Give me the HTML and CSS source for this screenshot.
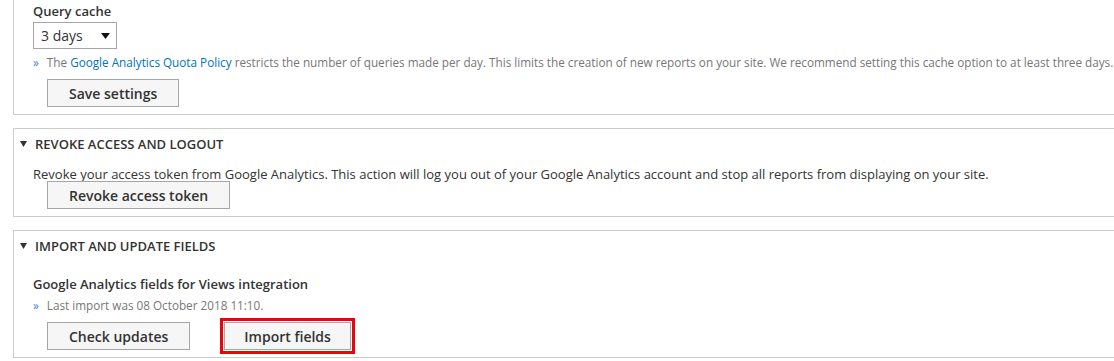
FILE: index.html
```html
<!DOCTYPE html>
<html lang="en">
<head>
    <meta charset="UTF-8">
    <meta name="viewport" content="width=device-width, initial-scale=1.0">
    <title>Google Analytics Reports settings</title>
    <link rel="stylesheet" href="styles.css">
</head>
<body>
    <div class="page">
        <!-- settings (top of the fieldset is scrolled off) -->
        <div class="panel panel-cut">
            <div class="panel-body">
                <div class="field-label">Query cache</div>
                <div class="select-box">
                    <span>3 days</span>
                    <svg class="select-arrow" width="9" height="6" viewBox="0 0 9 6"><path d="M0 0H9L4.5 6Z" fill="#111"/></svg>
                </div>
                <div class="description"><span class="raquo">&raquo;</span> The <a href="#">Google Analytics Quota Policy</a> restricts the number of queries made per day. This limits the creation of new reports on your site. We recommend setting this cache option to at least three days.</div>
                <div class="actions">
                    <button class="btn">Save settings</button>
                </div>
            </div>
        </div>

        <div class="panel">
            <div class="legend">
                <svg class="legend-arrow" width="7" height="6" viewBox="0 0 7 6"><path d="M0 0H7L3.5 6Z" fill="#333"/></svg>
                <span>Revoke access and logout</span>
            </div>
            <div class="panel-body">
                <p class="text">Revoke your access token from Google Analytics. This action will log you out of your Google Analytics account and stop all reports from displaying on your site.</p>
                <div class="actions">
                    <button class="btn">Revoke access token</button>
                </div>
            </div>
        </div>

        <div class="panel">
            <div class="legend">
                <svg class="legend-arrow" width="7" height="6" viewBox="0 0 7 6"><path d="M0 0H7L3.5 6Z" fill="#333"/></svg>
                <span>Import and update fields</span>
            </div>
            <div class="panel-body panel-body-spaced">
                <div class="field-label">Google Analytics fields for Views integration</div>
                <div class="description description-tight"><span class="raquo">&raquo;</span> Last import was 08 October 2018 11:10.</div>
                <div class="actions">
                    <button class="btn">Check updates</button>
                    <button class="btn btn-marked">Import fields</button>
                </div>
            </div>
        </div>
    </div>
</body>
</html>
```

FILE: styles.css
```css
body {
    margin: 0;
    background: #fff;
    color: #333;
    font-family: "Open Sans", "Liberation Sans", sans-serif;
    overflow: hidden;
}

.page {
    padding-left: 13px;
}

.panel {
    border: 1px solid #ccc;
    margin-right: -20px;
    margin-bottom: 13px;
}

.panel-cut {
    border-top: none;
}

.panel-body {
    padding: 1px 0 7px 19px;
}

.legend {
    display: flex;
    align-items: center;
    gap: 8px;
    padding: 6px 0 0 6px;
    font-size: 13px;
    line-height: 18px;
    font-weight: 600;
    text-transform: uppercase;
    color: #333;
}

.legend + .panel-body {
    padding-top: 13px;
}

.legend + .panel-body-spaced {
    padding-top: 19px;
}

.field-label {
    font-size: 13px;
    line-height: 20px;
    font-weight: 600;
    color: #333;
}

.select-box {
    display: flex;
    align-items: center;
    justify-content: space-between;
    box-sizing: border-box;
    width: 84px;
    height: 27px;
    margin-top: 1px;
    padding: 0 6px 0 7px;
    border: 1px solid #a6a6a6;
    font-size: 14px;
    color: #333;
}

.description {
    margin-top: 4px;
    font-size: 11.72px;
    line-height: 18px;
    color: #777;
    white-space: nowrap;
}

.description-tight {
    margin-top: 2px;
}

.description a {
    color: #0074bd;
    text-decoration: none;
}

.raquo {
    color: #3d7fe0;
    margin-right: 5px;
}

.text {
    margin: 0;
    font-size: 13px;
    line-height: 16px;
    color: #333;
}

.actions {
    display: flex;
    gap: 34px;
    padding-left: 14px;
    margin-top: 8px;
}

.description-tight + .actions {
    margin-top: 8px;
}

.text + .actions {
    margin-top: -1px;
}

.btn {
    box-sizing: border-box;
    height: 28px;
    padding: 0 21px;
    background: #f6f6f6;
    border: 1px solid #a6a6a6;
    border-radius: 0;
    font-family: inherit;
    font-size: 14px;
    font-weight: 600;
    color: #333;
}

.btn-marked {
    padding: 0 19px;
    outline: 3px solid #e8060a;
    outline-offset: 1px;
}
```
